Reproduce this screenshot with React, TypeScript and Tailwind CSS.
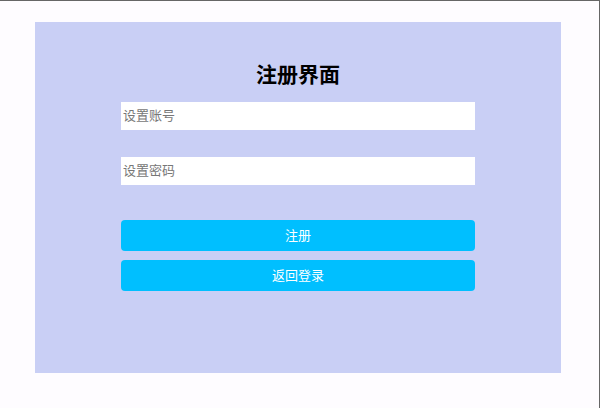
export default function App() {
  return (
    <div
      className="h-[408px] w-[600px] overflow-hidden border-t border-r border-[#666666] bg-[#fefcff]"
      style={{ fontFamily: '"Noto Sans CJK SC", "Liberation Sans", sans-serif' }}
    >
      <div className="ml-[35px] mt-[21px] flex h-[351px] w-[526px] flex-col items-center bg-[#c9cff5] pt-[37px]">
        <h2 className="text-[21px] leading-[28px] font-bold text-black">注册界面</h2>

        <div className="mt-[15px] flex w-[354px] flex-col">
          <input
            type="text"
            placeholder="设置账号"
            className="h-[28px] w-full bg-white px-[2px] pb-[3px] text-[13px] text-black outline-none placeholder:text-[#777777]"
          />
          <input
            type="password"
            placeholder="设置密码"
            className="mt-[27px] h-[28px] w-full bg-white px-[2px] pb-[3px] text-[13px] text-black outline-none placeholder:text-[#777777]"
          />

          <button className="mt-[35px] h-[31px] w-full rounded-[4px] bg-[#00bfff] pb-[2px] text-[13px] text-white">
            注册
          </button>
          <button className="mt-[9px] h-[31px] w-full rounded-[4px] bg-[#00bfff] pb-[2px] text-[13px] text-white">
            返回登录
          </button>
        </div>
      </div>
    </div>
  );
}
